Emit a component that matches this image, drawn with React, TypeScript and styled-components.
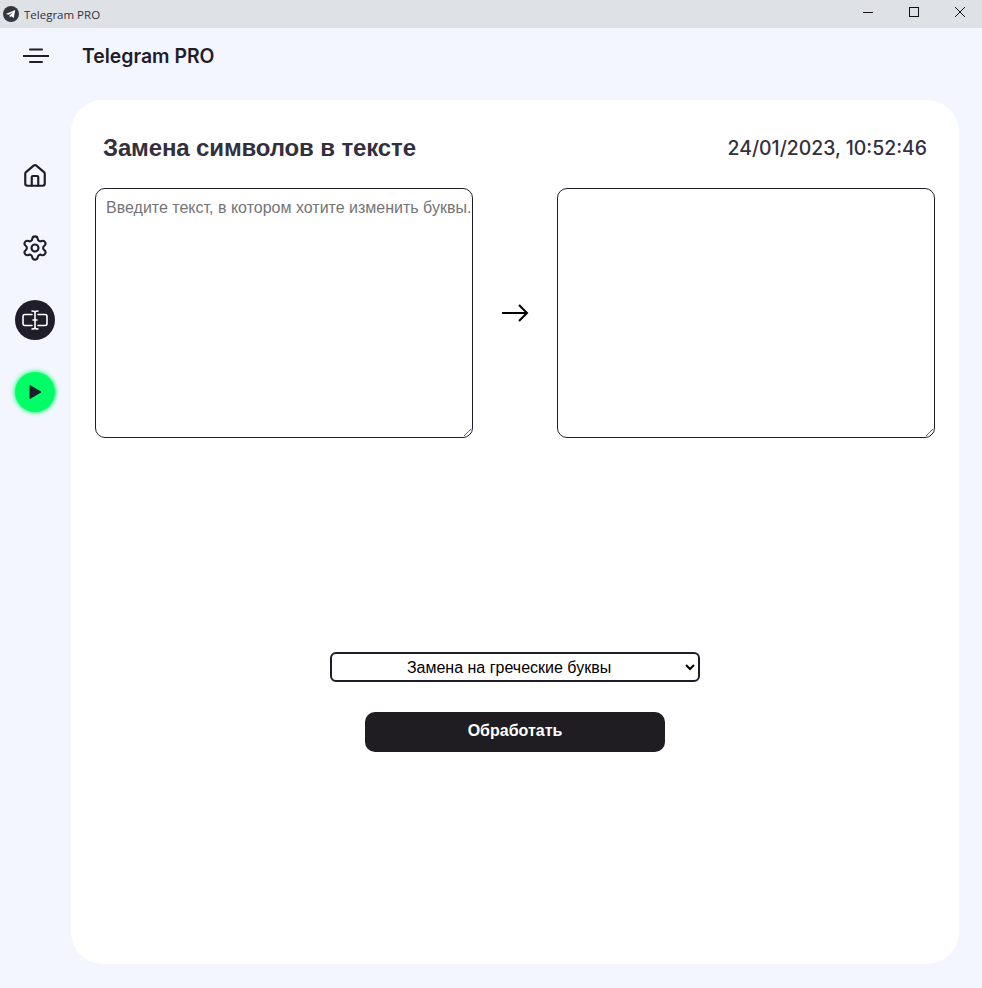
import React from "react";
import styled, { createGlobalStyle } from "styled-components";
import { House, Settings } from "lucide-react";

const Global = createGlobalStyle`
  html, body { margin: 0; padding: 0; height: 100%; background: #f3f6fe; }
  #root { height: 988px; }
  * { box-sizing: border-box; }
`;

const Page = styled.div`
  width: 982px;
  height: 988px;
  display: flex;
  flex-direction: column;
  background: #f3f6fe;
  overflow: hidden;
`;

const TitleBar = styled.div`
  height: 28px;
  flex: none;
  display: flex;
  align-items: center;
  padding-left: 3px;
  background: #dee1e6;
`;

const AppTitle = styled.span`
  margin-left: 5px;
  font: 400 11.5px "Open Sans", "Liberation Sans", sans-serif;
  color: #30323a;
`;

const WindowControls = styled.div`
  margin-left: auto;
  margin-right: -1px;
  align-self: flex-start;
  display: flex;
`;

const WindowButton = styled.div`
  width: 46px;
  height: 24px;
  display: flex;
  align-items: center;
  justify-content: center;
`;

const AppHeader = styled.header`
  height: 56px;
  flex: none;
  display: flex;
  align-items: center;
  padding-left: 23px;
  gap: 33px;
`;

const BrandName = styled.h1`
  margin: 0;
  font: 600 19.4px "Inter", "Liberation Sans", sans-serif;
  color: #1f1d2b;
`;

const Body = styled.div`
  flex: 1;
  display: flex;
  padding: 16px 23px 24px 0;
`;

const SideNav = styled.nav`
  width: 70px;
  margin-right: 1px;
  flex: none;
  display: flex;
  flex-direction: column;
  align-items: center;
  gap: 32px;
  padding-top: 56px;
`;

const NavItem = styled.div<{ $tone?: "dark" | "green" }>`
  width: 40px;
  height: 40px;
  border-radius: 50%;
  display: flex;
  align-items: center;
  justify-content: center;
  color: #1f1d2b;
  background: ${(p) => (p.$tone === "dark" ? "#1f1d2b" : p.$tone === "green" ? "#00ff66" : "transparent")};
  box-shadow: ${(p) => (p.$tone === "green" ? "0 0 4px 1px #2bff80" : "none")};
`;

const Card = styled.main`
  flex: 1;
  display: flex;
  flex-direction: column;
  background: #fff;
  border-radius: 32px;
  padding: 0 24px;
`;

const CardHeader = styled.div`
  height: 88px;
  flex: none;
  display: flex;
  align-items: center;
  justify-content: space-between;
  padding: 8px 8px 0;
`;

const PageTitle = styled.h2`
  margin: 0;
  font: 700 24px "Liberation Sans", sans-serif;
  letter-spacing: -0.13px;
  color: #33303e;
`;

const Clock = styled.time`
  font: 500 19.4px "Inter", "Liberation Sans", sans-serif;
  color: #33303e;
`;

const Editors = styled.div`
  display: flex;
  align-items: center;
  justify-content: space-between;
`;

const TextBox = styled.textarea`
  display: block;
  width: 378px;
  height: 250px;
  padding: 10px 0 10px 10px;
  border: 1px solid #1f1d2b;
  border-radius: 10px;
  background: #fff;
  font: 400 16px "Liberation Sans", sans-serif;
  white-space: pre;
  overflow: hidden;
  outline: none;
  &::placeholder { color: #757575; white-space: pre; }
`;

const Controls = styled.div`
  margin-top: 214px;
  display: flex;
  flex-direction: column;
  align-items: center;
  gap: 30px;
`;

const ModeSelect = styled.select`
  width: 370px;
  height: 30px;
  border: 2px solid #1f1d2b;
  border-radius: 6px;
  background: #fff;
  color: #000;
  font: 400 16px "Liberation Sans", sans-serif;
  text-align: center;
  outline: none;
`;

const SubmitButton = styled.button`
  width: 300px;
  height: 40px;
  padding: 0 0 2px;
  border: 0;
  border-radius: 10px;
  background: #1f1d22;
  color: #fff;
  font: 700 16px "Liberation Sans", sans-serif;
`;

export default function App() {
  return (
    <Page>
      <Global />
      <TitleBar>
        <svg width="16" height="16" viewBox="0 0 16 16">
          <circle cx="8" cy="8" r="8" fill="#33363f" />
          <path d="M2.8 8 12.2 4 10.8 12 8.2 10.2 6.8 11.6 6.6 9.2 10.4 6 5.6 8.8Z" fill="#fff" />
        </svg>
        <AppTitle>Telegram PRO</AppTitle>
        <WindowControls>
          <WindowButton>
            <svg width="12" height="12" viewBox="0 0 12 12"><path d="M1 6.5h10" stroke="#111" /></svg>
          </WindowButton>
          <WindowButton>
            <svg width="12" height="12" viewBox="0 0 12 12"><rect x="1.5" y="1.5" width="9" height="9" fill="none" stroke="#111" /></svg>
          </WindowButton>
          <WindowButton>
            <svg width="12" height="12" viewBox="0 0 12 12"><path d="M1 1l10 10M11 1 1 11" stroke="#111" /></svg>
          </WindowButton>
        </WindowControls>
      </TitleBar>
      <AppHeader>
        <svg width="26" height="16" viewBox="0 0 26 16">
          <path d="M7 1.5h12M0 8h26M7 14h12" stroke="#1f1d2b" strokeWidth="2" strokeLinecap="round" />
        </svg>
        <BrandName>Telegram PRO</BrandName>
      </AppHeader>
      <Body>
        <SideNav>
          <NavItem><House size={26} strokeWidth={2} /></NavItem>
          <NavItem><Settings size={28} strokeWidth={1.8} /></NavItem>
          <NavItem $tone="dark">
            <svg width="26" height="20" viewBox="0 0 26 20" fill="none" stroke="#fff" strokeWidth="1.6" strokeLinecap="round">
              <path d="M10 4.5H3a2 2 0 0 0-2 2v7a2 2 0 0 0 2 2h7M16 4.5h7a2 2 0 0 1 2 2v7a2 2 0 0 1-2 2h-7" />
              <path d="M13 2v16M10 1c1.5 0 3 .5 3 1.500C13 1.500 14.500 1 16 1M10 19c1.500 0 3-.5 3-1.500 0 1 1.500 1.500 3 1.500M11 10h4" />
            </svg>
          </NavItem>
          <NavItem $tone="green">
            <svg width="14" height="16" viewBox="0 0 14 16">
              <path d="M2 1.500 13 8 2 14.500Z" fill="#1f1d2b" stroke="#1f1d2b" strokeWidth="1" strokeLinejoin="round" />
            </svg>
          </NavItem>
        </SideNav>
        <Card>
          <CardHeader>
            <PageTitle>Замена символов в тексте</PageTitle>
            <Clock>24/01/2023, 10:52:46</Clock>
          </CardHeader>
          <Editors>
            <TextBox placeholder="Введите текст, в котором хотите изменить буквы." />
            <svg width="28" height="20" viewBox="0 0 28 20" fill="none" stroke="#000" strokeWidth="2">
              <path d="M1 10h25M18 2l8 8-8 8" />
            </svg>
            <TextBox />
          </Editors>
          <Controls>
            <ModeSelect defaultValue="greek">
              <option value="greek">Замена на греческие буквы</option>
            </ModeSelect>
            <SubmitButton>Обработать</SubmitButton>
          </Controls>
        </Card>
      </Body>
    </Page>
  );
}
